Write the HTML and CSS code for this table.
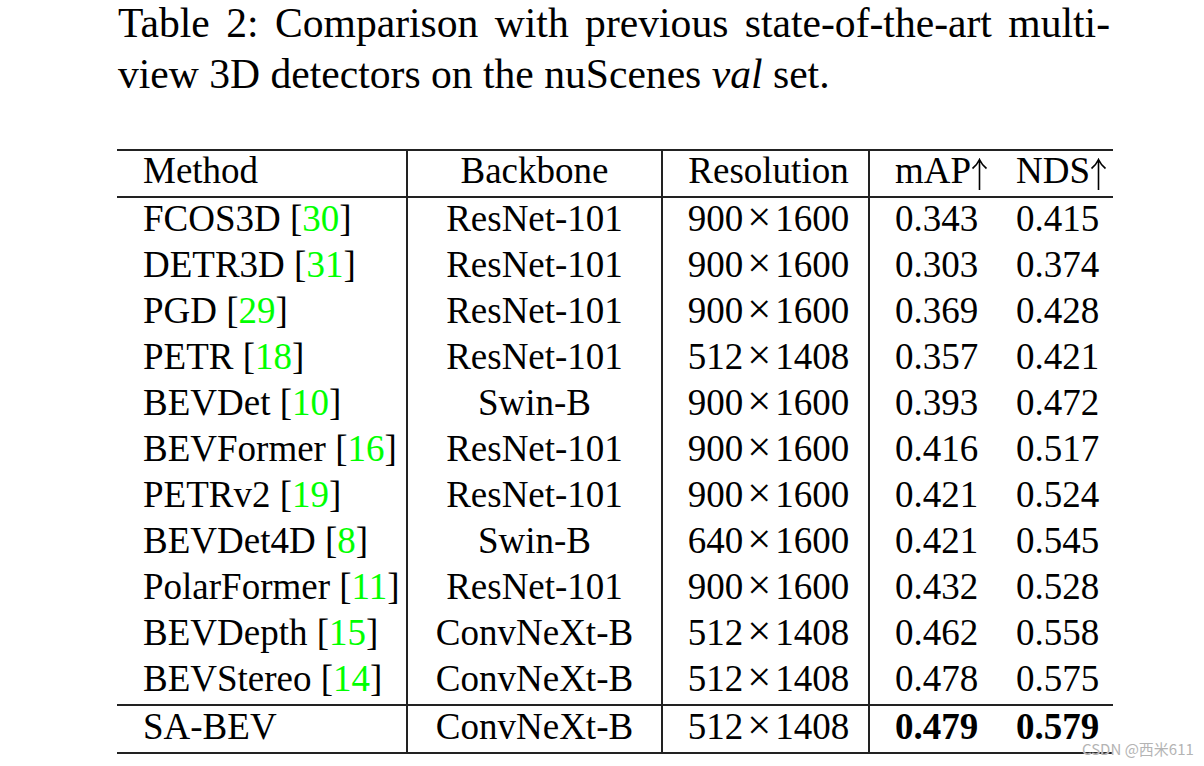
FILE: index.html
```html
<!DOCTYPE html>
<html>
<head>
<meta charset="utf-8">
<link rel="stylesheet" href="styles.css">
</head>
<body>
<div class="page">
  <div class="caption">
    <div class="cap-line first">Table 2: Comparison with previous state-of-the-art multi-</div>
    <div class="cap-line">view 3D detectors on the nuScenes <i>val</i> set.</div>
  </div>
  <div class="tbl">
    <div class="row head">
      <div class="c c1">Method</div>
      <div class="c c2">Backbone</div>
      <div class="c c3">Resolution</div>
      <div class="c c4">mAP<svg class="up" width="17" height="32" viewBox="0 0 17 32"><path d="M8.5 1.5V32M1.5 10.5Q6 7 8.5 1.5Q11 7 15.5 10.5" fill="none" stroke="#000" stroke-width="1.6"/></svg></div>
      <div class="c c5">NDS<svg class="up" width="17" height="32" viewBox="0 0 17 32"><path d="M8.5 1.5V32M1.5 10.5Q6 7 8.5 1.5Q11 7 15.5 10.5" fill="none" stroke="#000" stroke-width="1.6"/></svg></div>
    </div>
    <div class="body">
      <div class="row"><div class="c c1">FCOS3D [<span class="cite">30</span>]</div><div class="c c2">ResNet-101</div><div class="c c3">900<span class="x">×</span>1600</div><div class="c c4">0.343</div><div class="c c5">0.415</div></div>
      <div class="row"><div class="c c1">DETR3D [<span class="cite">31</span>]</div><div class="c c2">ResNet-101</div><div class="c c3">900<span class="x">×</span>1600</div><div class="c c4">0.303</div><div class="c c5">0.374</div></div>
      <div class="row"><div class="c c1">PGD [<span class="cite">29</span>]</div><div class="c c2">ResNet-101</div><div class="c c3">900<span class="x">×</span>1600</div><div class="c c4">0.369</div><div class="c c5">0.428</div></div>
      <div class="row"><div class="c c1">PETR [<span class="cite">18</span>]</div><div class="c c2">ResNet-101</div><div class="c c3">512<span class="x">×</span>1408</div><div class="c c4">0.357</div><div class="c c5">0.421</div></div>
      <div class="row"><div class="c c1">BEVDet [<span class="cite">10</span>]</div><div class="c c2">Swin-B</div><div class="c c3">900<span class="x">×</span>1600</div><div class="c c4">0.393</div><div class="c c5">0.472</div></div>
      <div class="row"><div class="c c1">BEVFormer [<span class="cite">16</span>]</div><div class="c c2">ResNet-101</div><div class="c c3">900<span class="x">×</span>1600</div><div class="c c4">0.416</div><div class="c c5">0.517</div></div>
      <div class="row"><div class="c c1">PETRv2 [<span class="cite">19</span>]</div><div class="c c2">ResNet-101</div><div class="c c3">900<span class="x">×</span>1600</div><div class="c c4">0.421</div><div class="c c5">0.524</div></div>
      <div class="row"><div class="c c1">BEVDet4D [<span class="cite">8</span>]</div><div class="c c2">Swin-B</div><div class="c c3">640<span class="x">×</span>1600</div><div class="c c4">0.421</div><div class="c c5">0.545</div></div>
      <div class="row"><div class="c c1">PolarFormer [<span class="cite">11</span>]</div><div class="c c2">ResNet-101</div><div class="c c3">900<span class="x">×</span>1600</div><div class="c c4">0.432</div><div class="c c5">0.528</div></div>
      <div class="row"><div class="c c1">BEVDepth [<span class="cite">15</span>]</div><div class="c c2">ConvNeXt-B</div><div class="c c3">512<span class="x">×</span>1408</div><div class="c c4">0.462</div><div class="c c5">0.558</div></div>
      <div class="row"><div class="c c1">BEVStereo [<span class="cite">14</span>]</div><div class="c c2">ConvNeXt-B</div><div class="c c3">512<span class="x">×</span>1408</div><div class="c c4">0.478</div><div class="c c5">0.575</div></div>
    </div>
    <div class="row last">
      <div class="c c1">SA-BEV</div>
      <div class="c c2">ConvNeXt-B</div>
      <div class="c c3">512<span class="x">×</span>1408</div>
      <div class="c c4"><b>0.479</b></div>
      <div class="c c5"><b>0.579</b></div>
    </div>
  </div>
  <div class="watermark">CSDN @西米611</div>
</div>
</body>
</html>
```
FILE: styles.css
```css
html, body {
  margin: 0;
  padding: 0;
  background: #ffffff;
}

.page {
  position: relative;
  width: 1204px;
  height: 766px;
  overflow: hidden;
  font-family: "Liberation Serif", "Times New Roman", serif;
  color: #000;
}

.caption {
  margin-left: 118px;
  width: 992px;
  font-size: 41.6px;
}

.cap-line {
  line-height: 46px;
  white-space: nowrap;
}

.cap-line.first {
  text-align: justify;
  text-align-last: justify;
  white-space: normal;
}

.cap-line + .cap-line {
  margin-top: 5px;
}

.tbl {
  margin-top: 52px;
  margin-left: 117px;
  width: 996px;
  border-top: 2px solid #222;
  border-bottom: 2px solid #222;
  font-size: 37px;
}

.row {
  display: grid;
  grid-template-columns: 291px 255px 207px 120px 123px;
}

.row.head {
  border-bottom: 2px solid #222;
}

.body {
  border-bottom: 2px solid #222;
}

.c {
  box-sizing: border-box;
  line-height: 29px;
  height: 46px;
  white-space: nowrap;
  padding-top: 6px;
  padding-bottom: 11px;
}

.head .c {
  height: 45px;
  padding-top: 5px;
}

.last .c {
  padding-top: 6px;
}

.c1 {
  padding-left: 26px;
  border-right: 2px solid #222;
}

.c2 {
  text-align: center;
  border-right: 2px solid #222;
}

.c3 {
  text-align: center;
  padding-left: 6px;
  border-right: 2px solid #222;
}

.c4 {
  padding-left: 25px;
}

.c5 {
  padding-left: 26px;
}

.cite {
  color: #00ff00;
}

.x {
  font-size: 1.15em;
  line-height: 0;
  margin: 0 4px;
}

.up {
  vertical-align: -7px;
}

.watermark {
  position: absolute;
  left: 1082px;
  top: 740px;
  font-family: "Noto Sans CJK SC", "DejaVu Sans", sans-serif;
  font-size: 15px;
  line-height: 18px;
  color: #b4b4b4;
  text-shadow: 0 0 1px #ffffff;
  white-space: nowrap;
}
```
